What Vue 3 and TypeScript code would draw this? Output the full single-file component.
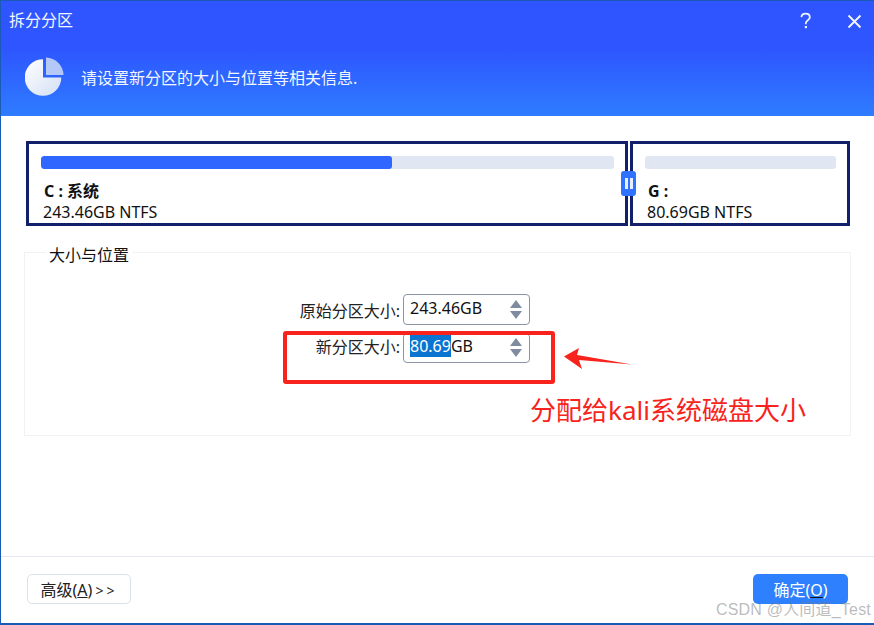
<script setup lang="ts">
interface Part { name: string; info: string; used: number }
const left: Part = { name: 'C : 系统', info: '243.46GB NTFS', used: 61.3 }
const right: Part = { name: 'G :', info: '80.69GB NTFS', used: 0 }
</script>

<template>
  <div class="win">
    <header class="head">
      <div class="titlebar">
        <span class="title">拆分分区</span>
        <div class="ctrls">
          <svg class="ic" width="14" height="18" viewBox="0 0 14 18"><path d="M2.4 5.2C2.6 2.9 4.4 1.7 6.6 1.7c2.4 0 4.2 1.4 4.2 3.5 0 1.6-.9 2.5-2.2 3.4-1.2.8-1.8 1.5-1.8 3v.6" fill="none" stroke="#eef2ff" stroke-width="1.8"/><rect x="5.8" y="14" width="2.2" height="2.2" fill="#eef2ff"/></svg>
          <svg class="ic" width="15" height="15" viewBox="0 0 15 15"><path d="M1.5 1.5l12 12M13.5 1.5l-12 12" stroke="#f2f5ff" stroke-width="1.9" fill="none"/></svg>
        </div>
      </div>
      <div class="banner">
        <svg class="pie" width="40" height="40" viewBox="0 0 40 40">
          <defs>
            <linearGradient id="pg" x1="0" y1="0" x2="1" y2="1"><stop offset="0" stop-color="#ffffff"/><stop offset="1" stop-color="#d3dff5"/></linearGradient>
          </defs>
          <path d="M18 2.5V20.500h18.3A18.3 18.3 0 1 1 18 2.200z" fill="url(#pg)"/>
          <path d="M21 0.500A18 18 0 0 1 38.500 18H21z" fill="#b4c9f8"/>
        </svg>
        <span class="desc">请设置新分区的大小与位置等相关信息.</span>
      </div>
    </header>

    <main class="body">
      <div class="parts">
        <section class="part part-l">
          <div class="bar"><div class="fill" :style="{ width: left.used + '%' }"></div></div>
          <div class="pname">{{ left.name }}</div>
          <div class="pinfo">{{ left.info }}</div>
        </section>
        <section class="part part-r">
          <div class="bar"></div>
          <div class="pname">{{ right.name }}</div>
          <div class="pinfo">{{ right.info }}</div>
        </section>
        <div class="handle"><i></i><i></i></div>
      </div>

      <fieldset class="group">
        <legend class="legend">大小与位置</legend>
        <div class="rows">
          <div class="row">
            <label class="lab">原始分区大小:</label>
            <div class="spin">
              <span class="val">243.46GB</span>
              <span class="arrows"><b class="up"></b><b class="down"></b></span>
            </div>
          </div>
          <div class="row row2">
            <label class="lab">新分区大小:</label>
            <div class="spin">
              <span class="val"><span class="sel">80.69</span>GB</span>
              <span class="arrows"><b class="up"></b><b class="down"></b></span>
            </div>
          </div>
        </div>
      </fieldset>
    </main>

    <footer class="foot">
      <button class="btn adv">高级(<u>A</u>)<span class="gt">&gt;&gt;</span></button>
      <button class="btn ok">确定(<u>O</u>)</button>
    </footer>

    <div class="mark-box"></div>
    <svg class="mark-arrow" width="72" height="24" viewBox="0 0 72 24">
      <path d="M1 9.500L16 1l-2 7 55 9.500-53-4.500 3 9z" fill="#f8231c"/>
    </svg>
    <div class="mark-text">分配给kali系统磁盘大小</div>
    <div class="watermark">CSDN @人间道_Test</div>
  </div>
</template>

<style>
html, body { margin: 0; background: #fff; }
</style>

<style scoped>
.win {
  position: relative;
  width: 874px;
  height: 625px;
  box-sizing: border-box;
  display: flex;
  flex-direction: column;
  background: #fff;
  border-left: 1px solid #1a5bb5;
  border-top: 1px solid #1a5bb5;
  border-bottom: 2px solid #1a5bb5;
  font-family: "Noto Sans", "Noto Sans CJK SC", sans-serif;
  color: #111;
  overflow: hidden;
}
.head {
  height: 115px;
  flex: none;
  background: linear-gradient(180deg, #2e55ff 0%, #2e55ff 40%, #2e7cff 100%);
  color: #fff;
}
.titlebar {
  height: 40px;
  display: flex;
  align-items: center;
  justify-content: space-between;
  padding: 0 12px 0 8px;
}
.title { font-size: 16px; line-height: 22px; margin-top: -2px; color: #f3f6ff; }
.ctrls { display: flex; align-items: center; gap: 34px; }
.ic { display: block; }
.banner {
  display: flex;
  align-items: center;
  padding: 16px 0 0 24px;
}
.pie { flex: none; margin-right: 16px; }
.desc { font-size: 16px; color: #f3f6ff; }
.body {
  flex: 1;
  padding: 25px 23px 0 23px;
  display: flex;
  flex-direction: column;
}
.parts { position: relative; display: flex; gap: 2px; margin-left: 2px; }
.part {
  box-sizing: border-box;
  height: 85px;
  border: 3px solid #12206b;
  padding: 12px 11px 0 12px;
}
.part-l { width: 602px; }
.part-r { width: 220px; }
.bar {
  height: 13px;
  border-radius: 3px;
  background: #e0e6f2;
  overflow: hidden;
}
.fill { height: 100%; background: #2e66ff; border-radius: 3px; }
.pname {
  margin-top: 12px;
  padding-left: 3px;
  font-size: 16px;
  font-weight: 700;
  line-height: 20px;
}
.pinfo { font-size: 16px; line-height: 20px; padding-left: 2px; margin-top: 1px; }
.handle {
  position: absolute;
  left: 595px;
  top: 30px;
  width: 15px;
  height: 25px;
  border-radius: 3px;
  background: #2e72ff;
  display: flex;
  align-items: center;
  justify-content: center;
  gap: 2px;
}
.handle i { display: block; width: 3px; height: 11px; background: #e6eeff; }
.group {
  box-sizing: border-box;
  margin: 12px 0 0 0;
  width: 827px;
  height: 198px;
  padding: 0;
  border: 1px solid #f0f2f6;
  min-inline-size: 0;
}
.legend { margin-left: 21px; padding: 6px 3px 0; font-size: 16px; line-height: 22px; }
.rows { padding-top: 28px; display: flex; flex-direction: column; gap: 7px; }
.row { display: flex; align-items: center; height: 31px; }
.lab {
  width: 375px;
  margin-right: 3px;
  text-align: right;
  font-size: 16px;
  color: #222;
}
.row2 .lab { margin-top: -3px; }
.spin {
  box-sizing: border-box;
  width: 127px;
  height: 31px;
  border: 1px solid #8a94a6;
  border-radius: 4px;
  display: flex;
  align-items: center;
  justify-content: space-between;
  padding: 0 7px 0 6px;
  font-size: 16px;
}
.row2 .spin { height: 30px; }
.val { line-height: 21px; margin-top: -2px; }
.sel { background: #0a74d1; color: #fff; }
.arrows { display: flex; flex-direction: column; gap: 3px; }
.up, .down { display: block; width: 0; height: 0; border-left: 6.500px solid transparent; border-right: 6.500px solid transparent; }
.up { border-bottom: 8px solid #7f8b9e; }
.down { border-top: 8px solid #7f8b9e; }
.foot {
  flex: none;
  box-sizing: border-box;
  height: 67px;
  border-top: 1px solid #e6e8f0;
  display: flex;
  justify-content: space-between;
  align-items: flex-start;
  padding: 17px 26px 0 26px;
}
.btn {
  box-sizing: border-box;
  height: 30px;
  border-radius: 5px;
  font-family: inherit;
  font-size: 16px;
  padding: 0;
  cursor: pointer;
}
.adv { width: 104px; background: #fff; border: 1px solid #dbe1ec; color: #222; }
.gt { letter-spacing: 3px; margin-left: 3px; font-size: 14px; }
.ok { width: 95px; background: #2e80ff; border: none; color: #fff; }
.ok u { text-decoration-color: #111; }
.mark-box {
  position: absolute;
  left: 282px;
  top: 330px;
  width: 272px;
  height: 53px;
  box-sizing: border-box;
  border: 4px solid #f8231c;
  border-radius: 3px;
}
.mark-arrow { position: absolute; left: 562px; top: 346px; }
.mark-text {
  position: absolute;
  left: 529px;
  top: 391px;
  font-size: 26px;
  line-height: 36px;
  color: #f8231c;
  white-space: nowrap;
}
.watermark {
  position: absolute;
  right: 3px;
  bottom: 3px;
  font-family: "Liberation Sans", "Noto Sans CJK SC", sans-serif;
  font-size: 16px;
  line-height: 20px;
  color: rgba(120, 120, 120, 0.5);
  white-space: nowrap;
  letter-spacing: 0.200px;
}
</style>
